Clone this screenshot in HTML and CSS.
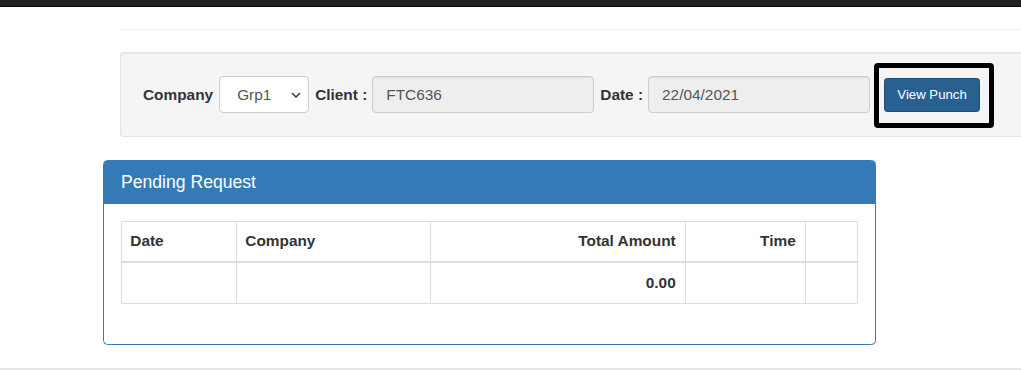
FILE: index.html
```html
<!DOCTYPE html>
<html>
<head>
<meta charset="utf-8">
<link rel="stylesheet" href="styles.css">
</head>
<body>
<div class="navbar"></div>
<div class="page-head"></div>
<div class="well">
  <div class="form-row">
    <span class="lbl lbl-company">Company</span>
    <div class="select">
      <span class="select-text">Grp1</span>
      <svg class="chev" width="10" height="6" viewBox="0 0 10 6"><polyline points="1,1 5,5 9,1" fill="none" stroke="#444" stroke-width="1.6"/></svg>
    </div>
    <span class="lbl lbl-client">Client :</span>
    <div class="input">FTC636</div>
    <span class="lbl lbl-date">Date :</span>
    <div class="input">22/04/2021</div>
    <button class="btn">View Punch</button>
  </div>
  <div class="highlight"></div>
</div>
<div class="panel">
  <div class="panel-heading">Pending Request</div>
  <div class="panel-body">
    <table class="tbl">
      <colgroup>
        <col class="c1"><col class="c2"><col class="c3"><col class="c4"><col class="c5">
      </colgroup>
      <thead>
        <tr><th>Date</th><th>Company</th><th class="r">Total Amount</th><th class="r">Time</th><th></th></tr>
      </thead>
      <tbody>
        <tr><td></td><td></td><td class="r b">0.00</td><td></td><td></td></tr>
      </tbody>
    </table>
  </div>
</div>
<div class="footer"></div>
</body>
</html>
```

FILE: styles.css
```css
html, body {
  margin: 0;
  padding: 0;
  background: #fff;
  overflow: hidden;
}
body {
  font-family: "Liberation Sans", Arial, sans-serif;
  font-size: 15.4px;
  color: #333;
  width: 1021px;
  height: 370px;
}
.navbar {
  height: 6px;
  background: #222;
  border-bottom: 1px solid #080808;
}
.page-head {
  margin-left: 120px;
  height: 22px;
  border-bottom: 1px solid #eee;
}
.well {
  position: relative;
  box-sizing: border-box;
  margin-left: 120px;
  margin-top: 22px;
  width: 901px;
  height: 85px;
  background: #f5f5f5;
  border: 1px solid #e3e3e3;
  border-right: none;
  border-radius: 4px 0 0 4px;
  box-shadow: inset 0 1px 1px rgba(0,0,0,0.05);
  display: flex;
  align-items: center;
}
.form-row {
  display: flex;
  align-items: center;
  padding-left: 22px;
}
.lbl {
  font-weight: bold;
  white-space: nowrap;
}
.lbl-company { margin-right: 6px; }
.lbl-client { margin-left: 6px; margin-right: 5px; }
.lbl-date { margin-left: 6px; margin-right: 5px; }
.select {
  box-sizing: border-box;
  width: 90px;
  height: 37px;
  background: #fff;
  border: 1px solid #ccc;
  border-radius: 4px;
  display: flex;
  align-items: center;
  padding-left: 17px;
  padding-right: 7px;
  color: #555;
}
.select-text { flex: 1; }
.chev { display: block; margin-top: 1px; }
.input {
  box-sizing: border-box;
  width: 222px;
  height: 37px;
  background: #eee;
  border: 1px solid #ccc;
  border-radius: 4px;
  padding: 0 13px;
  display: flex;
  align-items: center;
  color: #555;
  box-shadow: inset 0 1px 1px rgba(0,0,0,0.075);
}
.btn {
  box-sizing: border-box;
  margin-left: 14px;
  height: 34px;
  width: 96px;
  padding: 0 11px;
  font-family: "Liberation Sans", Arial, sans-serif;
  font-size: 13.2px;
  color: #fff;
  background: #286090;
  border: 1px solid #204d74;
  border-radius: 3.3px;
  white-space: nowrap;
}
.highlight {
  position: absolute;
  left: 753px;
  top: 10px;
  width: 120px;
  height: 65px;
  box-sizing: border-box;
  border: 5px solid #000;
  border-radius: 4px;
}
.panel {
  box-sizing: border-box;
  margin-left: 103px;
  margin-top: 23px;
  width: 773px;
  border: 1px solid #337ab7;
  border-radius: 4.4px;
  background: #fff;
}
.panel-heading {
  box-sizing: border-box;
  height: 43px;
  background: #337ab7;
  color: #fff;
  font-size: 17.6px;
  padding-left: 17px;
  display: flex;
  align-items: center;
  border-radius: 3px 3px 0 0;
}
.panel-body {
  padding: 16.5px 18px 18px 16.5px;
}
.tbl {
  width: 736px;
  table-layout: fixed;
  border-collapse: collapse;
  margin-bottom: 22px;
}
.c1 { width: 115px; }
.c2 { width: 194px; }
.c3 { width: 255px; }
.c4 { width: 120px; }
.c5 { width: 52px; }
.tbl th, .tbl td {
  border: 1px solid #ddd;
  padding: 8.8px;
  line-height: 22px;
  height: 22px;
  text-align: left;
  font-weight: bold;
}
.tbl thead th {
  border-bottom: 2px solid #ddd;
}
.tbl .r { text-align: right; }
.footer {
  margin-top: 23px;
  height: 10px;
  background: #e7e7e7;
}
```
